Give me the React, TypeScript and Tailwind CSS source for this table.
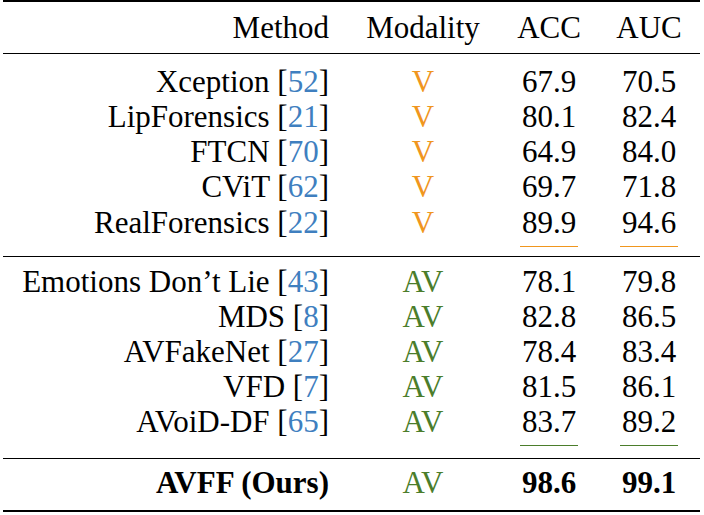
import React from "react";

type Row = { name: string; cite: string; acc: string; auc: string; ul?: boolean };

const g1: Row[] = [
  { name: "Xception", cite: "52", acc: "67.9", auc: "70.5" },
  { name: "LipForensics", cite: "21", acc: "80.1", auc: "82.4" },
  { name: "FTCN", cite: "70", acc: "64.9", auc: "84.0" },
  { name: "CViT", cite: "62", acc: "69.7", auc: "71.8" },
  { name: "RealForensics", cite: "22", acc: "89.9", auc: "94.6", ul: true },
];

const g2: Row[] = [
  { name: "Emotions Don\u2019t Lie", cite: "43", acc: "78.1", auc: "79.8" },
  { name: "MDS", cite: "8", acc: "82.8", auc: "86.5" },
  { name: "AVFakeNet", cite: "27", acc: "78.4", auc: "83.4" },
  { name: "VFD", cite: "7", acc: "81.5", auc: "86.1" },
  { name: "AVoiD-DF", cite: "65", acc: "83.7", auc: "89.2", ul: true },
];

const rowCls = "grid grid-cols-[345px_150px_102px_98px] h-[35.2px] leading-[35.2px] whitespace-nowrap";

function Num({ value, ul, v }: { value: string; ul?: boolean; v: "V" | "AV" }) {
  if (!ul) return <span>{value}</span>;
  return (
    <span className="relative inline-block">
      {value}
      <span
        className={
          v === "V"
            ? "absolute left-[-2px] right-[-2px] top-[41px] h-[1px] bg-[#f0961e]"
            : "absolute left-[-2px] right-[-2px] top-[41px] h-[1px] bg-[#4b7d2b]"
        }
      />
    </span>
  );
}

function DataRow({ r, v }: { r: Row; v: "V" | "AV" }) {
  const modCls = v === "V" ? "text-[#f0961e]" : "text-[#4b7d2b]";
  return (
    <div className={rowCls}>
      <div className="text-right pr-[19px]">
        {r.name} [<span className="text-[#3f7fbf]">{r.cite}</span>]
      </div>
      <div className={`text-center ${modCls}`}>{v}</div>
      <div className="text-center">
        <Num value={r.acc} ul={r.ul} v={v} />
      </div>
      <div className="text-center">
        <Num value={r.auc} ul={r.ul} v={v} />
      </div>
    </div>
  );
}

export default function App() {
  return (
    <div
      className="w-[704px] h-[515px] bg-white text-black overflow-hidden"
      style={{ fontFamily: '"Liberation Serif", "Times New Roman", serif' }}
    >
      <div className="ml-[3px] w-[697px] flex flex-col text-[31px]">
        <div className="h-[2px] bg-black" />
        <div className={`${rowCls} mt-[7.6px]`}>
          <div className="text-right pr-[19px]">Method</div>
          <div className="text-center">Modality</div>
          <div className="text-center">ACC</div>
          <div className="text-center">AUC</div>
        </div>
        <div className="h-[1px] bg-black mt-[8.2px]" />
        <div className="mt-[9.8px] flex flex-col">
          {g1.map((r) => (
            <DataRow key={r.name} r={r} v="V" />
          ))}
        </div>
        <div className="h-[1px] bg-black mt-[16.2px]" />
        <div className="mt-[6.8px] flex flex-col">
          {g2.map((r) => (
            <DataRow key={r.name} r={r} v="AV" />
          ))}
        </div>
        <div className="h-[1px] bg-black mt-[18.2px]" />
        <div className={`${rowCls} mt-[6.4px]`}>
          <div className="text-right pr-[19px] font-bold">AVFF (Ours)</div>
          <div className="text-center text-[#4b7d2b]">AV</div>
          <div className="text-center font-bold">98.6</div>
          <div className="text-center font-bold">99.1</div>
        </div>
        <div className="h-[2px] bg-black mt-[9.9px]" />
      </div>
    </div>
  );
}
